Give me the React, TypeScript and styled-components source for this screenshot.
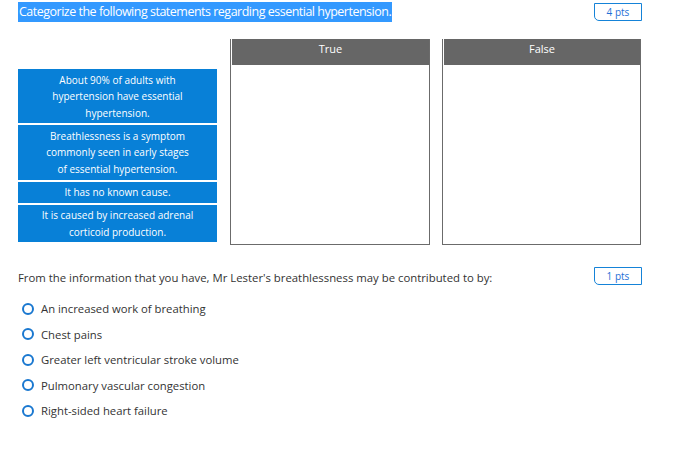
import React from "react";
import styled, { createGlobalStyle } from "styled-components";

const Global = createGlobalStyle`
  html, body { margin: 0; padding: 0; background: #ffffff; }
  body { font-family: "Open Sans", "Noto Sans", sans-serif; color: #333333; }
  * { box-sizing: border-box; }
`;

const Page = styled.div`
  width: 676px;
  height: 456px;
  padding: 2px 34px 0 18px;
  display: flex;
  flex-direction: column;
`;

const QuestionHeader = styled.div`
  display: flex;
  justify-content: space-between;
  align-items: flex-start;
`;

const Title = styled.span`
  background: #3399ff;
  color: #ffffff;
  font-size: 12.5px;
  letter-spacing: -0.5px;
  line-height: 20px;
  padding: 0 1px 0 1px;
`;

const Points = styled.div<{ $top?: number }>`
  width: 48px;
  height: 18px;
  margin-top: ${(p) => p.$top ?? 0}px;
  border: 1px solid #1583d8;
  border-radius: 0 0 0 5px;
  color: #1f6fd6;
  font-size: 10px;
  line-height: 16px;
  text-align: center;
  flex: none;
`;

const DragArea = styled.div`
  display: flex;
  align-items: flex-start;
  margin-top: 17px;
`;

const Choices = styled.div`
  width: 199px;
  flex: none;
  margin-top: 30px;
  margin-right: 13px;
  display: flex;
  flex-direction: column;
  gap: 2px;
`;

const Choice = styled.div`
  background: #0880d7;
  color: #ffffff;
  font-size: 10px;
  line-height: 16.6px;
  padding: 2.5px 8px 2px;
  text-align: center;
  white-space: nowrap;
`;

const Bucket = styled.div<{ $w: number; $gap?: number }>`
  width: ${(p) => p.$w}px;
  flex: none;
  height: 206px;
  border: 1px solid #6b6b6b;
  border-top: none;
  padding: 0 0 0 1px;
  margin-right: ${(p) => p.$gap ?? 0}px;
`;

const BucketHead = styled.div`
  background: #666666;
  color: #ffffff;
  font-size: 11px;
  height: 26px;
  line-height: 20px;
  text-align: center;
`;

const Question2 = styled(QuestionHeader)`
  margin-top: 22px;
  align-items: center;
`;

const Prompt = styled.div`
  font-size: 11.35px;
  color: #333333;
  padding-top: 3px;
`;

const Options = styled.div`
  display: flex;
  flex-direction: column;
  margin-top: 11px;
  padding-left: 4px;
`;

const Option = styled.label`
  display: flex;
  align-items: center;
  gap: 7px;
  height: 25.5px;
  font-size: 11.3px;
  color: #333333;
`;

const Radio = styled.span`
  width: 12px;
  height: 12px;
  border: 2px solid #1a78d0;
  border-radius: 50%;
  flex: none;
`;

const statements: string[][] = [
  ["About 90% of adults with", "hypertension have essential", "hypertension."],
  ["Breathlessness is a symptom", "commonly seen in early stages", "of essential hypertension."],
  ["It has no known cause."],
  ["It is caused by increased adrenal", "corticoid production."],
];

const answers = [
  "An increased work of breathing",
  "Chest pains",
  "Greater left ventricular stroke volume",
  "Pulmonary vascular congestion",
  "Right-sided heart failure",
];

export default function App() {
  return (
    <>
      <Global />
      <Page>
        <QuestionHeader>
          <Title>Categorize the following statements regarding essential hypertension.</Title>
          <Points $top={1}>4 pts</Points>
        </QuestionHeader>
        <DragArea>
          <Choices>
            {statements.map((lines) => (
              <Choice key={lines.join(" ")}>
                {lines.map((l, i) => (
                  <React.Fragment key={l}>
                    {i > 0 && <br />}
                    {l}
                  </React.Fragment>
                ))}
              </Choice>
            ))}
          </Choices>
          <Bucket $w={200} $gap={12}>
            <BucketHead>True</BucketHead>
          </Bucket>
          <Bucket $w={199}>
            <BucketHead>False</BucketHead>
          </Bucket>
        </DragArea>
        <Question2>
          <Prompt>From the information that you have, Mr Lester's breathlessness may be contributed to by:</Prompt>
          <Points>1 pts</Points>
        </Question2>
        <Options>
          {answers.map((a) => (
            <Option key={a}>
              <Radio />
              {a}
            </Option>
          ))}
        </Options>
      </Page>
    </>
  );
}
